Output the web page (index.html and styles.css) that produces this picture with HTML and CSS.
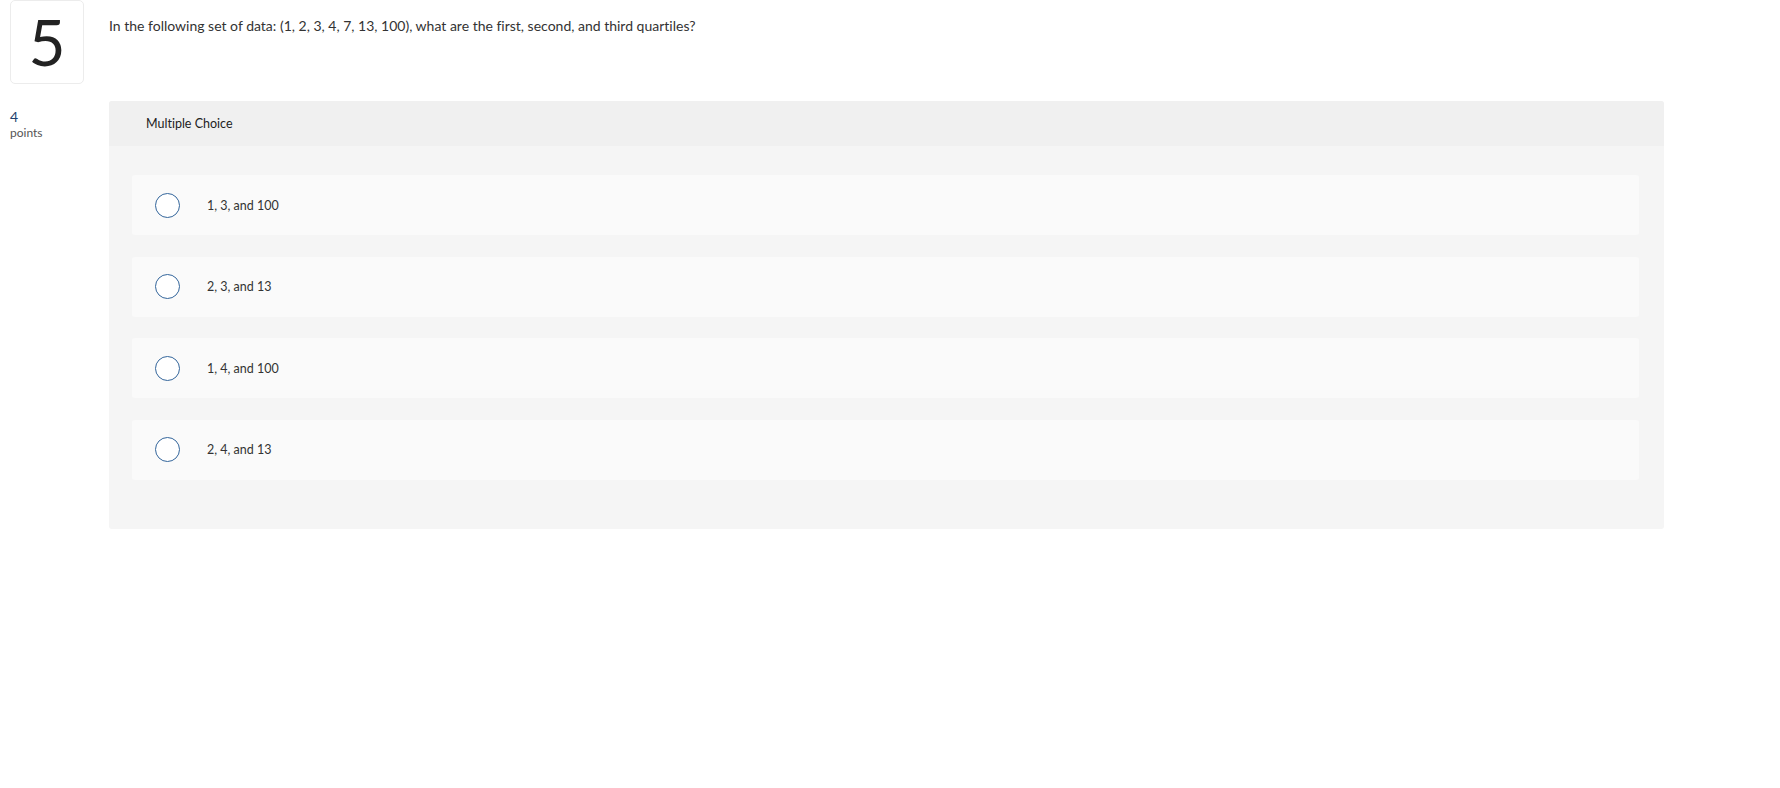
FILE: index.html
```html
<!DOCTYPE html>
<html lang="en">
<head>
<meta charset="UTF-8">
<meta name="viewport" content="width=device-width, initial-scale=1.0">
<title>Question 5</title>
<link rel="stylesheet" href="styles.css">
</head>
<body>

<div class="question">
<div class="question-num">5</div>
<div class="prompt">In the following set of data: (1, 2, 3, 4, 7, 13, 100), what are the first, second, and third quartiles?</div>
</div>

<div class="answer-row">
<div class="points">
<div class="points-value">4</div>
<div class="points-label">points</div>
</div>

<div class="panel">
<div class="panel-header">Multiple Choice</div>
<div class="panel-body">
<label class="choice"><span class="radio"></span><span class="choice-text">1, 3, and 100</span></label>
<label class="choice"><span class="radio"></span><span class="choice-text">2, 3, and 13</span></label>
<label class="choice"><span class="radio"></span><span class="choice-text">1, 4, and 100</span></label>
<label class="choice"><span class="radio"></span><span class="choice-text">2, 4, and 13</span></label>
</div>
</div>
</div>

</body>
</html>
```

FILE: styles.css
```css
body {
font-family: Lato, "Open Sans", Arial, sans-serif;
font-variant-ligatures: none;
margin: 0;
background-color: #fff;
color: #333;
}
.question {
display: flex;
align-items: flex-start;
}
.question-num {
box-sizing: border-box;
width: 74px;
height: 84px;
margin-left: 10px;
border: 1px solid #ececec;
border-radius: 5px;
background-color: #fff;
display: flex;
justify-content: center;
align-items: center;
font-size: 64px;
font-weight: 400;
color: #222;
line-height: 1;
}
.prompt {
padding-left: 25px;
padding-top: 17px;
font-size: 14px;
line-height: 17px;
}
.answer-row {
display: flex;
margin-top: 17px;
}
.points {
width: 99px;
padding-left: 10px;
padding-top: 7px;
}
.points-value {
font-size: 14px;
line-height: 17px;
color: #1f3f6e;
}
.points-label {
font-size: 12px;
line-height: 15px;
color: #555;
}
.panel {
width: 1555px;
border-radius: 3px;
background-color: #f5f5f5;
overflow: hidden;
}
.panel-header {
height: 45px;
display: flex;
align-items: center;
padding-left: 37px;
background-color: #f0f0f0;
font-size: 12.5px;
color: #222;
}
.panel-body {
display: flex;
flex-direction: column;
gap: 21.5px;
padding: 29px 25px 49px 23px;
}
.choice {
height: 60px;
display: flex;
align-items: center;
padding-left: 23px;
border-radius: 3px;
background-color: #fafafa;
cursor: pointer;
}
.radio {
box-sizing: border-box;
width: 25px;
height: 25px;
border: 1.5px solid #33659b;
border-radius: 50%;
background-color: #fff;
flex-shrink: 0;
}
.choice-text {
margin-left: 27px;
font-size: 12.5px;
color: #333;
}
```
